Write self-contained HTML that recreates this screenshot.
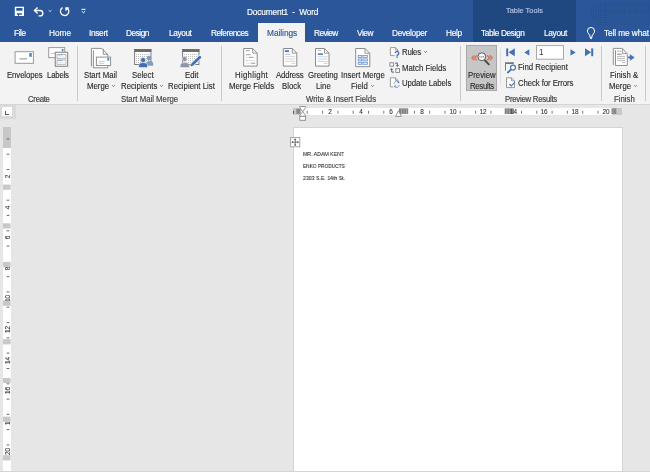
<!DOCTYPE html>
<html><head><meta charset="utf-8">
<style>
*{margin:0;padding:0;box-sizing:border-box}
html,body{width:650px;height:472px;overflow:hidden;background:#e6e6e6;font-family:"Liberation Sans",sans-serif}
svg{position:absolute;overflow:visible}
.t,.g,.tab,.rl,.doc{will-change:transform}
.t,.g{transform:scaleY(1.05);transform-origin:0 6.6px}
#top{position:absolute;left:0;top:0;width:650px;height:42px;background:#2b579a}
#ctx{position:absolute;left:473px;top:0;width:103px;height:42px;background:#1f4880}
.tab{position:absolute;top:28px;color:#fff;-webkit-text-stroke:0.15px currentColor;font-size:8.3px;white-space:nowrap;line-height:10px}
#active{position:absolute;left:258px;top:23px;width:47px;height:20px;background:#f3f3f3}
#ribbon{position:absolute;left:0;top:42px;width:650px;height:62.5px;background:#f3f3f3;border-bottom:1px solid #d5d5d5}
.t{position:absolute;font-size:7.8px;color:#262626;-webkit-text-stroke:0.1px #262626;white-space:nowrap;line-height:8px}
.g{position:absolute;font-size:7.8px;color:#404040;-webkit-text-stroke:0.15px #404040;white-space:nowrap;line-height:8px;top:95.8px}
.r1{top:71.9px}.r2{top:82.9px}
.sep{position:absolute;top:45.6px;width:1px;height:55.8px;background:#c9c9c9}
.dd{display:inline-block;width:3px;height:2.4px;margin-left:3px;position:relative;top:-1.9px}
#page{position:absolute;left:293px;top:127px;width:330px;height:345px;background:#fff;border-left:1px solid #d4d4d4;border-right:1px solid #d4d4d4;border-top:1px solid #d4d4d4}
.doc{position:absolute;font-size:6.1px;color:#222;-webkit-text-stroke:0.08px #222;white-space:nowrap;line-height:6px;left:303.4px;transform-origin:0 0}
.rl{position:absolute;font-size:6.4px;color:#333;-webkit-text-stroke:0.1px #333;line-height:7px;top:108px}
.tk{position:absolute;top:110px;width:1px;height:3px;background:#777}
.vtk{position:absolute;left:6px;width:3px;height:1px;background:#777}
.vl{position:absolute;opacity:0.99;font-size:6.4px;color:#333;-webkit-text-stroke:0.1px #333;line-height:7px;transform:rotate(-90deg);transform-origin:center}
</style></head><body>
<div id="top"></div>
<div id="ctx"></div>
<div style="position:absolute;left:590px;top:2px;width:60px;height:23px;border-radius:11px 0 0 11px;background-image:radial-gradient(circle,rgba(25,55,105,0.45) 0.55px,transparent 0.9px);background-size:2.4px 2.4px"></div>
<div style="position:absolute;left:606px;top:14px;width:44px;height:12px;border-radius:0 0 0 10px;background:#2b579a;opacity:0.5"></div>
<!-- QAT -->
<svg style="left:0;top:0" width="100" height="22">
 <path fill="#fff" fill-rule="evenodd" d="M14.8 6.8h9.2v9.1h-9.2z M16.3 8h6.2v2.7h-6.2z M16.9 13.2h4.9v1.5h-2.7v1.2h-1v-1.2h-1.2z"/>
 <path d="M37.6 7.4l-3.1 3.1 3.1 3.1" fill="none" stroke="#fff" stroke-width="1.4"/>
 <path d="M34.8 10.5h5.3a2.7 2.7 0 0 1 0 5.4h-1.6" fill="none" stroke="#fff" stroke-width="1.4"/>
 <path d="M48.6 10.2l1.5 1.4 1.5-1.4" fill="none" stroke="#dfe6f1" stroke-width="0.9"/>
 <path d="M62.6 7.6a4.2 4.2 0 1 0 4.9 0.6" fill="none" stroke="#fff" stroke-width="1.3"/>
 <path d="M65.3 7.3h3.5v1l-2.6 2.5h-0.9z" fill="#fff"/>
 <path d="M81.5 9.3h4M81.8 11.2l1.7 1.6 1.7-1.6" fill="none" stroke="#fff" stroke-width="1"/>
</svg>
<div class="tab" style="left:246.5px;top:7px;font-size:8.3px;letter-spacing:-0.153px">Document1&nbsp; -&nbsp; Word</div>
<div class="tab" style="left:506px;top:6.3px;font-size:7.4px;color:#b4c6e4">Table Tools</div>
<div class="tab" style="left:13.5px;letter-spacing:-0.400px">File</div>
<div class="tab" style="left:48.5px;letter-spacing:0.000px">Home</div>
<div class="tab" style="left:88.5px;letter-spacing:-0.320px">Insert</div>
<div class="tab" style="left:126px;letter-spacing:-0.480px">Design</div>
<div class="tab" style="left:168.5px;letter-spacing:-0.400px">Layout</div>
<div class="tab" style="left:210.5px;letter-spacing:-0.528px">References</div>
<div id="active"></div>
<div class="tab" style="left:266.5px;color:#2b579a;letter-spacing:-0.029px">Mailings</div>
<div class="tab" style="left:314px;letter-spacing:-0.580px">Review</div>
<div class="tab" style="left:357px;letter-spacing:-0.467px">View</div>
<div class="tab" style="left:392px;letter-spacing:-0.325px">Developer</div>
<div class="tab" style="left:445.5px;letter-spacing:-0.333px">Help</div>
<div class="tab" style="left:481px;letter-spacing:-0.377px">Table Design</div>
<div class="tab" style="left:543.5px;letter-spacing:-0.320px">Layout</div>
<svg style="left:581px;top:24.3px" width="20" height="18">
 <path d="M11 13.5v-1.5c0-1.2 2.6-2.6 2.6-5a3.6 3.6 0 0 0-7.2 0c0 2.4 2.6 3.8 2.6 5v1.5z" fill="none" stroke="#fff" stroke-width="1"/>
 <path d="M9.2 14.6h1.6" stroke="#fff" stroke-width="1"/>
</svg>
<div class="tab" style="left:604px;letter-spacing:-0.1px">Tell me what</div>

<div id="ribbon"></div>
<!-- separators -->
<div class="sep" style="left:77px"></div>
<div class="sep" style="left:221px"></div>
<div class="sep" style="left:460px"></div>
<div class="sep" style="left:601px"></div>
<div class="sep" style="left:645px"></div>

<!-- Create group icons -->
<svg style="left:0;top:0" width="650" height="104">
 <!-- Envelope -->
 <rect x="15.1" y="51.7" width="18.3" height="11.6" fill="#fff" stroke="#989898" stroke-width="1"/>
 <rect x="29.2" y="53.1" width="2.6" height="3.7" fill="#5585c6"/>
 <path d="M19.3 58.8h7.7" stroke="#b4b4b4" stroke-width="1.5"/>
 <!-- Labels -->
 <rect x="48.7" y="47.6" width="16" height="10" fill="#fff" stroke="#9a9a9a" stroke-width="1"/>
 <rect x="61.8" y="49" width="1.7" height="2.4" fill="#5585c6"/>
 <path d="M51 53.5h5" stroke="#c8c8c8" stroke-width="1"/>
 <rect x="55.3" y="52.3" width="12.3" height="14" fill="#fff" stroke="#929292" stroke-width="1.2"/>
 <rect x="57" y="54.4" width="8.9" height="4.3" fill="#fff" stroke="#ababab" stroke-width="0.8"/>
 <rect x="57" y="60" width="8.9" height="4.3" fill="#fff" stroke="#ababab" stroke-width="0.8"/>
 <path d="M57.9 54.9h4.5M57.9 60.5h4.5" stroke="#6d98d2" stroke-width="0.7"/>
 <path d="M58 57h6.5M58 62.6h6.5" stroke="#d8d8d8" stroke-width="0.7"/>
 <!-- Start Mail Merge -->
 <path d="M91.4 66.4V48.4H101.8L107.8 54.8V67.8H93.4V50.3" fill="#fff" stroke="#909090" stroke-width="1"/>
 <path d="M103.3 48.8V54.3H107.8" fill="none" stroke="#909090" stroke-width="1"/>
 <rect x="96.4" y="57.1" width="14.2" height="8.4" fill="#fff" stroke="#909090" stroke-width="1"/>
 <rect x="107.4" y="58" width="1.8" height="2.6" fill="#4a7dbf"/>
 <path d="M98.8 61.4h6M98.8 63.3h5.5" stroke="#bdbdbd" stroke-width="0.8"/>
 <!-- Select Recipients calendar -->
 <rect x="134.6" y="49.5" width="16.3" height="15" fill="#fff" stroke="#7c7c7c" stroke-width="1"/>
 <rect x="134.1" y="49" width="17.3" height="3" fill="#6e6e6e"/>
 <g fill="#b4b4b4"><rect x="136.00" y="53.90" width="1" height="1"/><rect x="136.00" y="55.93" width="1" height="1"/><rect x="136.00" y="57.96" width="1" height="1"/><rect x="136.00" y="59.99" width="1" height="1"/><rect x="136.00" y="62.02" width="1" height="1"/><rect x="138.03" y="53.90" width="1" height="1"/><rect x="138.03" y="55.93" width="1" height="1"/><rect x="138.03" y="57.96" width="1" height="1"/><rect x="138.03" y="59.99" width="1" height="1"/><rect x="138.03" y="62.02" width="1" height="1"/><rect x="140.06" y="53.90" width="1" height="1"/><rect x="140.06" y="55.93" width="1" height="1"/><rect x="140.06" y="57.96" width="1" height="1"/><rect x="140.06" y="59.99" width="1" height="1"/><rect x="140.06" y="62.02" width="1" height="1"/><rect x="142.09" y="53.90" width="1" height="1"/><rect x="142.09" y="55.93" width="1" height="1"/><rect x="142.09" y="57.96" width="1" height="1"/><rect x="142.09" y="59.99" width="1" height="1"/><rect x="142.09" y="62.02" width="1" height="1"/><rect x="144.12" y="53.90" width="1" height="1"/><rect x="144.12" y="55.93" width="1" height="1"/><rect x="144.12" y="57.96" width="1" height="1"/><rect x="144.12" y="59.99" width="1" height="1"/><rect x="144.12" y="62.02" width="1" height="1"/><rect x="146.15" y="53.90" width="1" height="1"/><rect x="146.15" y="55.93" width="1" height="1"/><rect x="146.15" y="57.96" width="1" height="1"/><rect x="146.15" y="59.99" width="1" height="1"/><rect x="146.15" y="62.02" width="1" height="1"/><rect x="148.18" y="53.90" width="1" height="1"/><rect x="148.18" y="55.93" width="1" height="1"/><rect x="148.18" y="57.96" width="1" height="1"/><rect x="148.18" y="59.99" width="1" height="1"/><rect x="148.18" y="62.02" width="1" height="1"/></g>
 <circle cx="149.1" cy="58.1" r="2.4" fill="#7f9cc2"/>
 <path d="M146.2 65.8v-1.5a3.5 3.2 0 0 1 7 0v1.5z" fill="#7f9cc2"/>
 <circle cx="143.1" cy="60" r="2.5" fill="#3e6fb4" stroke="#fff" stroke-width="0.5"/>
 <path d="M138.7 67.6v-1.6a4.4 3.4 0 0 1 8.8 0v1.6z" fill="#3e6fb4" stroke="#fff" stroke-width="0.5"/>
 <!-- Edit Recipient List -->
 <rect x="182.6" y="49.5" width="16.3" height="15" fill="#fff" stroke="#7c7c7c" stroke-width="1"/>
 <rect x="182.1" y="49" width="17.3" height="3" fill="#6e6e6e"/>
 <g fill="#b4b4b4"><rect x="184.00" y="53.90" width="1" height="1"/><rect x="184.00" y="55.93" width="1" height="1"/><rect x="184.00" y="57.96" width="1" height="1"/><rect x="184.00" y="59.99" width="1" height="1"/><rect x="184.00" y="62.02" width="1" height="1"/><rect x="186.03" y="53.90" width="1" height="1"/><rect x="186.03" y="55.93" width="1" height="1"/><rect x="186.03" y="57.96" width="1" height="1"/><rect x="186.03" y="59.99" width="1" height="1"/><rect x="186.03" y="62.02" width="1" height="1"/><rect x="188.06" y="53.90" width="1" height="1"/><rect x="188.06" y="55.93" width="1" height="1"/><rect x="188.06" y="57.96" width="1" height="1"/><rect x="188.06" y="59.99" width="1" height="1"/><rect x="188.06" y="62.02" width="1" height="1"/><rect x="190.09" y="53.90" width="1" height="1"/><rect x="190.09" y="55.93" width="1" height="1"/><rect x="190.09" y="57.96" width="1" height="1"/><rect x="190.09" y="59.99" width="1" height="1"/><rect x="190.09" y="62.02" width="1" height="1"/><rect x="192.12" y="53.90" width="1" height="1"/><rect x="192.12" y="55.93" width="1" height="1"/><rect x="192.12" y="57.96" width="1" height="1"/><rect x="192.12" y="59.99" width="1" height="1"/><rect x="192.12" y="62.02" width="1" height="1"/><rect x="194.15" y="53.90" width="1" height="1"/><rect x="194.15" y="55.93" width="1" height="1"/><rect x="194.15" y="57.96" width="1" height="1"/><rect x="194.15" y="59.99" width="1" height="1"/><rect x="194.15" y="62.02" width="1" height="1"/><rect x="196.18" y="53.90" width="1" height="1"/><rect x="196.18" y="55.93" width="1" height="1"/><rect x="196.18" y="57.96" width="1" height="1"/><rect x="196.18" y="59.99" width="1" height="1"/><rect x="196.18" y="62.02" width="1" height="1"/></g>
 <circle cx="184.6" cy="59" r="2.5" fill="#8b96a6" stroke="#f3f3f3" stroke-width="0.5"/>
 <path d="M180.2 67.5v-1.5a4.6 3.4 0 0 1 9.2 0v1.5z" fill="#8b96a6" stroke="#f3f3f3" stroke-width="0.5"/>
 <path d="M192.6 64.2l7.2-6.9" stroke="#f3f3f3" stroke-width="4.2" stroke-linecap="round"/>
 <path d="M192.6 64.2l7.2-6.9" stroke="#4170b3" stroke-width="2.8" stroke-linecap="round"/>
 <path d="M190.9 65.9l1.3-1.3" stroke="#4170b3" stroke-width="1.4"/>
 <!-- Highlight Merge Fields doc -->
 <path d="M243.7 48.5h9l4.5 4.6v13h-13.5z" fill="#fff" stroke="#8a8a8a" stroke-width="1"/>
 <path d="M252.7 48.5v4.6h4.5" fill="none" stroke="#8a8a8a" stroke-width="0.9"/>
 <path d="M246 50.7h3.8M246 54.6h4.7" stroke="#b0b0b0" stroke-width="1.3"/>
 <path d="M246 57.4h9.4M246 60.5h9.4M246 63.2h9.4" stroke="#d8d8d8" stroke-width="0.8"/>
 <path d="M249.1 57.4h4M246 60.5h0.8M251.2 63.2h4" stroke="#9a9a9a" stroke-width="0.9"/>
 <!-- Address Block -->
 <path d="M283.3 48.5h9l4.5 4.6v13h-13.5z" fill="#fff" stroke="#8a8a8a" stroke-width="1"/>
 <path d="M292.3 48.5v4.6h4.5" fill="none" stroke="#8a8a8a" stroke-width="0.9"/>
 <rect x="284.8" y="50.2" width="4.2" height="1.9" fill="#4a7dbf"/>
 <path d="M285.1 54.3h5.3" stroke="#b0b0b0" stroke-width="0.9"/>
 <path d="M285.1 56.7h10M285.1 59.1h10M285.1 61.4h10M291.5 63.5h3.6" stroke="#cfcfcf" stroke-width="0.9"/>
 <!-- Greeting Line -->
 <path d="M315.5 48.5h9l4.5 4.6v13h-13.5z" fill="#fff" stroke="#8a8a8a" stroke-width="1"/>
 <path d="M324.5 48.5v4.6h4.5" fill="none" stroke="#8a8a8a" stroke-width="0.9"/>
 <path d="M317.8 50.4h3.7" stroke="#b0b0b0" stroke-width="0.9"/>
 <rect x="317.8" y="53.3" width="5.2" height="1.7" fill="#5a88c8"/>
 <path d="M317.6 56.8h10M317.6 59.1h10M317.6 61.4h10M323.6 63.5h3.6" stroke="#cfcfcf" stroke-width="0.9"/>
 <!-- Insert Merge Field -->
 <path d="M355.7 48.5h9.3l4.8 4.8v13.4h-14.1z" fill="#fff" stroke="#8a8a8a" stroke-width="1"/>
 <path d="M365 48.5v4.8h4.8" fill="none" stroke="#8a8a8a" stroke-width="0.9"/>
 <g fill="#e9f0fa" stroke="#5f8dcb" stroke-width="0.75">
  <rect x="358.2" y="55.6" width="3.6" height="2"/><rect x="362.9" y="55.6" width="4.6" height="2"/>
  <rect x="358.2" y="58.9" width="3.6" height="2"/><rect x="362.9" y="58.9" width="4.6" height="2"/>
  <rect x="358.2" y="62.3" width="3.6" height="2"/><rect x="362.9" y="62.3" width="4.6" height="2"/>
 </g>
 <!-- Rules -->
 <path d="M394.6 55.6h-4.2v-8h5l2.6 2.6v1.2" fill="#fff" stroke="#8f8f8f" stroke-width="0.9"/>
 <path d="M395.4 47.6v2.6h2.6" fill="none" stroke="#8f8f8f" stroke-width="0.8"/>
 <path d="M395.3 53.2a1.75 1.7 0 1 1 3 1.2c-0.7 0.5-1.3 0.7-1.3 1.6v0.3" fill="none" stroke="#3f72b6" stroke-width="1.3"/>
 <rect x="396.3" y="56.5" width="1.4" height="1.3" fill="#3f72b6"/>
 <!-- Match Fields -->
 <rect x="389.9" y="62.8" width="3.5" height="3.4" fill="#fff" stroke="#7f7f7f" stroke-width="0.9"/>
 <rect x="395.8" y="68.7" width="3.7" height="3.7" fill="#fff" stroke="#7f7f7f" stroke-width="0.9"/>
 <path d="M395.2 63.1h1.3a0.9 0.9 0 0 1 0.9 0.9v1.3" fill="none" stroke="#3f72b6" stroke-width="1.1"/>
 <path d="M395.8 65.1h3.3l-1.65 2z" fill="#3f72b6"/>
 <path d="M393.8 72.1h-1.3a0.9 0.9 0 0 1-0.9-0.9v-1.3" fill="none" stroke="#3f72b6" stroke-width="1.1"/>
 <path d="M389.9 70.1h3.3l-1.65-2z" fill="#3f72b6"/>
 <!-- Update Labels -->
 <path d="M393.2 86.8h-2.8v-9h5l2.6 2.6v1.8" fill="#fff" stroke="#8f8f8f" stroke-width="0.9"/>
 <path d="M395.4 77.8v2.6h2.6" fill="none" stroke="#8f8f8f" stroke-width="0.8"/>
 <path d="M394.1 83.6a2.7 2.6 0 0 1 4.9 -1.2M399.2 85.2a2.7 2.6 0 0 1 -4.9 1.2" fill="none" stroke="#5a86c4" stroke-width="1" stroke-dasharray="1.2 0.5"/>
 <path d="M398 81.2l1.6 1.6-2 0.4z M395.4 87.4l-1.6-1.6 2-0.4z" fill="#3f72b6"/>
 <!-- Preview Results button -->
 <rect x="466.5" y="45.5" width="30" height="45" fill="#c6c6c6" stroke="#a8a8a8" stroke-width="1"/>
 <path d="M474.4 55.3l-2.5 2.5 2.5 2.5M477 55.3l-2.5 2.5 2.5 2.5M487.1 55.3l2.5 2.5-2.5 2.5M489.7 55.3l2.5 2.5-2.5 2.5" fill="none" stroke="#e0674b" stroke-width="1.2"/>
 <path d="M485 60.5l3.8 3.8" stroke="#4a4a4a" stroke-width="1.9" stroke-linecap="round"/>
 <circle cx="481.8" cy="56.7" r="3.9" fill="#fff" stroke="#555" stroke-width="1"/>
 <path d="M479.2 56.8h5.2" stroke="#8a8a8a" stroke-width="1.3" stroke-dasharray="1.3 0.5"/>
 <!-- dotted separator -->
 <path d="M500.5 49.5v36" stroke="#cfcfcf" stroke-width="1" stroke-dasharray="1 1"/>
 <!-- nav -->
 <rect x="506.2" y="48.4" width="2" height="7.8" fill="#4170b3"/>
 <path d="M514.8 48.3v8l-6.2-4z" fill="#4170b3"/>
 <path d="M529.3 49.3v6.3l-5-3.15z" fill="#4170b3"/>
 <rect x="536.5" y="45.6" width="27" height="13.6" fill="#fff" stroke="#a9a9a9" stroke-width="1"/>
 <path d="M570.5 49.3v6.3l5.2-3.15z" fill="#4170b3"/>
 <path d="M585 48.3v8l6.2-4z" fill="#4170b3"/>
 <rect x="591.2" y="48.4" width="2" height="7.8" fill="#4170b3"/>
 <!-- Find Recipient -->
 <path d="M505.5 70.6v-7.2" fill="none" stroke="#7a7a7a" stroke-width="1"/>
 <rect x="505" y="62.3" width="8.8" height="1.6" fill="#6a6a6a"/>
 <circle cx="513" cy="67.6" r="2.5" fill="#fff" stroke="#3f72b6" stroke-width="1.2"/>
 <path d="M511 69.6l-3.2 2.9" stroke="#3f72b6" stroke-width="1.7" stroke-linecap="round"/>
 <!-- Check for Errors -->
 <path d="M506.5 77.8h5l3 3v6.8h-8z" fill="#fff" stroke="#8a8a8a" stroke-width="0.9"/>
 <path d="M511.5 77.8v3h3" fill="none" stroke="#8a8a8a" stroke-width="0.8"/>
 <path d="M509.5 84l1.8 1.9 3.5-3.5" fill="none" stroke="#3f72b6" stroke-width="1.1"/>
 <!-- Finish & Merge -->
 <path d="M613.3 64.9V48.4H622.3L627.3 53.9V65.5H615.5V50.2" fill="#fff" stroke="#929292" stroke-width="1"/>
 <path d="M622.6 48.8V53.6H627" fill="none" stroke="#929292" stroke-width="0.9"/>
 <path d="M617 51.2h4.8M617 56.4h8M617 58.4h8M617 60.4h8M622 62.4h3" stroke="#a8a8a8" stroke-width="0.8"/>
 <path d="M617 54.2h4.8" stroke="#9a9a9a" stroke-width="1.2"/>
 <path d="M628.1 57.4h3" stroke="#3f72b6" stroke-width="1.9"/>
 <path d="M630.2 54.7l4 2.75-4 2.85z" fill="#3f72b6" stroke="#3f72b6" stroke-width="0.6" stroke-linejoin="round"/>
</svg>

<!-- Ribbon texts -->
<div class="t r1" style="left:6.8px;letter-spacing:-0.1px">Envelopes</div>
<div class="t r1" style="left:46.8px;letter-spacing:-0.2px">Labels</div>
<div class="g" style="left:27.8px;letter-spacing:-0.3px">Create</div>
<div class="t r1" style="left:84.4px">Start Mail</div>
<div class="t r2" style="left:86.6px">Merge<svg class="dd" style="position:relative;display:inline-block;overflow:visible" width="3.4" height="2.4"><path d="M0.2 0.4l1.35 1.35 1.35-1.35" fill="none" stroke="#707070" stroke-width="0.9"/></svg></div>
<div class="t r1" style="left:132.3px">Select</div>
<div class="t r2" style="left:121px">Recipients<svg class="dd" style="position:relative;display:inline-block;overflow:visible" width="3.4" height="2.4"><path d="M0.2 0.4l1.35 1.35 1.35-1.35" fill="none" stroke="#707070" stroke-width="0.9"/></svg></div>
<div class="t r1" style="left:184.7px">Edit</div>
<div class="t r2" style="left:167.7px">Recipient List</div>
<div class="g" style="left:121px">Start Mail Merge</div>
<div class="t r1" style="left:234.8px;letter-spacing:0.3px">Highlight</div>
<div class="t r2" style="left:228.9px">Merge Fields</div>
<div class="t r1" style="left:276.3px;letter-spacing:-0.15px">Address</div>
<div class="t r2" style="left:281.5px">Block</div>
<div class="t r1" style="left:307.7px">Greeting</div>
<div class="t r2" style="left:315.6px">Line</div>
<div class="t r1" style="left:341px">Insert Merge</div>
<div class="t r2" style="left:351.3px">Field<svg class="dd" style="position:relative;display:inline-block;overflow:visible" width="3.4" height="2.4"><path d="M0.2 0.4l1.35 1.35 1.35-1.35" fill="none" stroke="#707070" stroke-width="0.9"/></svg></div>
<div class="t" style="left:401.9px;top:49.3px;letter-spacing:-0.2px">Rules<svg class="dd" style="position:relative;display:inline-block;overflow:visible" width="3.4" height="2.4"><path d="M0.2 0.4l1.35 1.35 1.35-1.35" fill="none" stroke="#707070" stroke-width="0.9"/></svg></div>
<div class="t" style="left:401.9px;top:64.8px">Match Fields</div>
<div class="t" style="left:401.9px;top:79.5px;letter-spacing:-0.08px">Update Labels</div>
<div class="g" style="left:305.9px">Write &amp; Insert Fields</div>
<div class="t r1" style="left:467.9px">Preview</div>
<div class="t r2" style="left:469.8px;letter-spacing:-0.3px">Results</div>
<div class="t" style="left:538.5px;top:48.8px;-webkit-text-stroke:0;color:#333;font-size:8px">1</div>
<div class="t" style="left:518.2px;top:63.5px">Find Recipient</div>
<div class="t" style="left:518.2px;top:79.5px;letter-spacing:-0.09px">Check for Errors</div>
<div class="g" style="left:504.9px;letter-spacing:-0.26px">Preview Results</div>
<div class="t r1" style="left:609.7px">Finish &amp;</div>
<div class="t r2" style="left:609px">Merge<svg class="dd" style="position:relative;display:inline-block;overflow:visible" width="3.4" height="2.4"><path d="M0.2 0.4l1.35 1.35 1.35-1.35" fill="none" stroke="#707070" stroke-width="0.9"/></svg></div>
<div class="g" style="left:614.2px">Finish</div>

<!-- Rulers -->
<div style="position:absolute;left:0;top:105px;width:15.7px;height:13.6px;background:#dadada"></div>
<div style="position:absolute;left:2px;top:7.2px;width:10.3px;height:9px;background:#fff;margin-top:100px"></div>
<div style="position:absolute;left:5px;top:111px;width:1.2px;height:3.5px;background:#555"></div>
<div style="position:absolute;left:5px;top:113.6px;width:4.3px;height:1.1px;background:#555"></div>

<div style="position:absolute;left:293px;top:108px;width:8px;height:7px;background:#c8c8c8"></div>
<div style="position:absolute;left:301px;top:108px;width:311px;height:7px;background:#fff"></div>
<div style="position:absolute;left:611.5px;top:108px;width:10.5px;height:7px;background:#c8c8c8"></div>

<div style="position:absolute;left:3px;top:127px;width:7.5px;height:345px;background:#fff"></div>
<div style="position:absolute;left:3px;top:127px;width:7.5px;height:20.5px;background:#c8c8c8"></div>

<svg style="left:0;top:0" width="650" height="472">
<path d="M293.5 110.8v3" stroke="#555" stroke-width="1"/>
<rect x="296.3" y="108.8" width="4" height="5" fill="#888"/>
<path d="M307.2 110.8v2.9" stroke="#6a6a6a" stroke-width="0.9"/>
<path d="M322.6 110.8v2.9" stroke="#6a6a6a" stroke-width="0.9"/>
<path d="M337.9 110.8v2.9" stroke="#6a6a6a" stroke-width="0.9"/>
<path d="M353.2 110.8v2.9" stroke="#6a6a6a" stroke-width="0.9"/>
<path d="M368.5 110.8v2.9" stroke="#6a6a6a" stroke-width="0.9"/>
<path d="M383.8 110.8v2.9" stroke="#6a6a6a" stroke-width="0.9"/>
<path d="M414.4 110.8v2.9" stroke="#6a6a6a" stroke-width="0.9"/>
<path d="M429.7 110.8v2.9" stroke="#6a6a6a" stroke-width="0.9"/>
<path d="M445.0 110.8v2.9" stroke="#6a6a6a" stroke-width="0.9"/>
<path d="M460.2 110.8v2.9" stroke="#6a6a6a" stroke-width="0.9"/>
<path d="M475.6 110.8v2.9" stroke="#6a6a6a" stroke-width="0.9"/>
<path d="M490.9 110.8v2.9" stroke="#6a6a6a" stroke-width="0.9"/>
<path d="M521.5 110.8v2.9" stroke="#6a6a6a" stroke-width="0.9"/>
<path d="M536.8 110.8v2.9" stroke="#6a6a6a" stroke-width="0.9"/>
<path d="M552.1 110.8v2.9" stroke="#6a6a6a" stroke-width="0.9"/>
<path d="M567.4 110.8v2.9" stroke="#6a6a6a" stroke-width="0.9"/>
<path d="M582.7 110.8v2.9" stroke="#6a6a6a" stroke-width="0.9"/>
<path d="M598.0 110.8v2.9" stroke="#6a6a6a" stroke-width="0.9"/>
<rect x="399.0" y="108.4" width="9.2" height="5.6" fill="#7d7d7d"/>
<path d="M401.3 108.4v5.6M404.0 108.4v5.6M406.6 108.4v5.6" stroke="#b9b9b9" stroke-width="0.8"/>
<rect x="504.7" y="108.4" width="9.2" height="5.6" fill="#7d7d7d"/>
<path d="M507.0 108.4v5.6M509.7 108.4v5.6M512.3 108.4v5.6" stroke="#b9b9b9" stroke-width="0.8"/>
<rect x="611.5" y="108.4" width="4.8" height="5.6" fill="#888"/><path d="M613.2 108.4v5.6" stroke="#aaa" stroke-width="0.6"/>
<path d="M299.8 106.5h5.8v1l-2.9 4.4-2.9-4.4z" fill="#fff" stroke="#8a8a8a" stroke-width="0.9"/>
<path d="M299.8 116.3h5.8v-1l-2.9-3.6-2.9 3.6z" fill="#fff" stroke="#8a8a8a" stroke-width="0.9"/>
<rect x="299.8" y="116.3" width="5.8" height="4" fill="#fff" stroke="#8a8a8a" stroke-width="0.9"/>
<path d="M395.6 116.4h5.8l-2.9-5.6z" fill="#fff" stroke="#8a8a8a" stroke-width="0.9"/>
<path d="M6.6 154.2h2.8" stroke="#5a5a5a" stroke-width="0.9"/>
<path d="M6.6 169.6h2.8" stroke="#5a5a5a" stroke-width="0.9"/>

<path d="M6.6 200.2h2.8" stroke="#5a5a5a" stroke-width="0.9"/>
<path d="M6.6 215.4h2.8" stroke="#5a5a5a" stroke-width="0.9"/>
<path d="M6.6 230.8h2.8" stroke="#5a5a5a" stroke-width="0.9"/>
<path d="M6.6 246.1h2.8" stroke="#5a5a5a" stroke-width="0.9"/>

<path d="M6.6 276.6h2.8" stroke="#5a5a5a" stroke-width="0.9"/>
<path d="M6.6 291.9h2.8" stroke="#5a5a5a" stroke-width="0.9"/>
<path d="M6.6 307.2h2.8" stroke="#5a5a5a" stroke-width="0.9"/>
<path d="M6.6 322.6h2.8" stroke="#5a5a5a" stroke-width="0.9"/>
<path d="M6.6 337.9h2.8" stroke="#5a5a5a" stroke-width="0.9"/>
<path d="M6.6 353.1h2.8" stroke="#5a5a5a" stroke-width="0.9"/>
<path d="M6.6 368.5h2.8" stroke="#5a5a5a" stroke-width="0.9"/>
<path d="M6.6 383.8h2.8" stroke="#5a5a5a" stroke-width="0.9"/>
<path d="M6.6 399.1h2.8" stroke="#5a5a5a" stroke-width="0.9"/>
<path d="M6.6 414.4h2.8" stroke="#5a5a5a" stroke-width="0.9"/>
<path d="M6.6 429.6h2.8" stroke="#5a5a5a" stroke-width="0.9"/>
<path d="M6.6 445.0h2.8" stroke="#5a5a5a" stroke-width="0.9"/>

<path d="M6.6 139.0h2.8" stroke="#5a5a5a" stroke-width="0.9"/>
</svg>
<div class="rl" style="left:325.2px;width:10px;text-align:center">2</div>
<div class="vl" style="left:1.8px;top:172.9px;width:10px;text-align:center">2</div>
<div class="rl" style="left:355.8px;width:10px;text-align:center">4</div>
<div class="vl" style="left:1.8px;top:203.5px;width:10px;text-align:center">4</div>
<div class="rl" style="left:386.4px;width:10px;text-align:center">6</div>
<div class="vl" style="left:1.8px;top:234.1px;width:10px;text-align:center">6</div>
<div class="rl" style="left:417.0px;width:10px;text-align:center">8</div>
<div class="vl" style="left:1.8px;top:264.7px;width:10px;text-align:center">8</div>
<div class="rl" style="left:447.6px;width:10px;text-align:center">10</div>
<div class="vl" style="left:1.8px;top:295.3px;width:10px;text-align:center">10</div>
<div class="rl" style="left:478.2px;width:10px;text-align:center">12</div>
<div class="vl" style="left:1.8px;top:325.9px;width:10px;text-align:center">12</div>
<div class="rl" style="left:510.3px;width:7px;text-align:center">14</div>
<div class="vl" style="left:1.8px;top:356.5px;width:10px;text-align:center">14</div>
<div class="rl" style="left:539.4px;width:10px;text-align:center">16</div>
<div class="vl" style="left:1.8px;top:387.1px;width:10px;text-align:center">16</div>
<div class="rl" style="left:570.0px;width:10px;text-align:center">18</div>
<div class="vl" style="left:1.8px;top:417.7px;width:10px;text-align:center">18</div>
<div class="rl" style="left:600.6px;width:10px;text-align:center">20</div>
<div class="vl" style="left:1.8px;top:448.3px;width:10px;text-align:center">20</div>
<svg style="left:0;top:0" width="20" height="472"><rect x="3" y="184.6" width="7.6" height="5.2" fill="#c8c8c8"/><rect x="3" y="223.3" width="7.6" height="5.2" fill="#c8c8c8"/><rect x="3" y="261.9" width="7.6" height="5.2" fill="#c8c8c8"/><rect x="3" y="300.6" width="7.6" height="5.2" fill="#c8c8c8"/><rect x="3" y="339.2" width="7.6" height="5.2" fill="#c8c8c8"/><rect x="3" y="377.9" width="7.6" height="5.2" fill="#c8c8c8"/><rect x="3" y="416.6" width="7.6" height="5.2" fill="#c8c8c8"/><rect x="3" y="455.2" width="7.6" height="5.2" fill="#c8c8c8"/></svg>
<div id="page"></div>
<svg style="left:290px;top:137px" width="11" height="11">
 <rect x="0.6" y="0.6" width="9.2" height="9.2" fill="#fff" stroke="#9a9a9a" stroke-width="0.9"/>
 <path d="M5.2 2v6.6M2 5.2h6.6" stroke="#555" stroke-width="0.8"/>
 <path d="M4.1 2.9l1.1-1.4 1.1 1.4zM4.1 7.5l1.1 1.4 1.1-1.4zM2.9 4.1l-1.4 1.1 1.4 1.1zM7.5 4.1l1.4 1.1-1.4 1.1z" fill="#444"/>
</svg>
<div class="doc" style="top:150.6px;transform:scaleX(0.855)">MR. ADAM KENT</div>
<div class="doc" style="top:163.2px;transform:scaleX(0.785)">ENKO PRODUCTS</div>
<div class="doc" style="top:175.2px;transform:scaleX(0.85)">2303 S.E. 14th St.</div>
<div style="position:absolute;left:0;top:471px;width:650px;height:1px;background:#d4d4d4"></div>
</body></html>
